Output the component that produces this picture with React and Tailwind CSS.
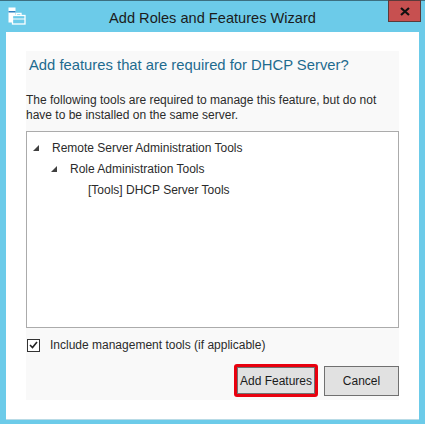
import { useState } from "react";

function AppIcon() {
  return (
    <svg width="18" height="18" viewBox="0 0 18 18" fill="none">
      <rect x="0.5" y="0.5" width="7" height="15" fill="#ffffff" />
      <rect x="0.5" y="4" width="7" height="1.5" fill="#2f7fbf" />
      <rect x="4.5" y="8.5" width="12.5" height="8.5" fill="#6ccbe9" stroke="#ffffff" strokeWidth="1.3" />
      <path d="M8.5 8.5V6.5h4.5V8.5" stroke="#ffffff" strokeWidth="1.3" />
      <path d="M4.5 12h12.5" stroke="#ffffff" strokeWidth="1" />
    </svg>
  );
}

function Arrow() {
  return (
    <svg width="6" height="6" viewBox="0 0 6 6" className="shrink-0">
      <path d="M6 0V6H0Z" fill="#404040" />
    </svg>
  );
}

export default function App() {
  const [checked, setChecked] = useState(true);

  return (
    <div className="w-[425px] h-[424px] bg-[#6ccbe9] border-t border-[#3c6f80] flex flex-col font-['Liberation_Sans',Arial,sans-serif]">
      {/* title bar */}
      <div className="h-[31px] flex items-start relative">
        <div className="pl-[8px] pt-[6px]">
          <AppIcon />
        </div>
        <div className="absolute left-0 right-0 top-[7px] text-center text-[14.6px] text-[#1b1b1b]">
          Add Roles and Features Wizard
        </div>
        <button className="absolute right-[4px] top-[-1px] w-[33px] h-[22px] bg-[#c75050] border border-[#5a3a3a] flex items-center justify-center">
          <svg width="10" height="9" viewBox="0 0 10 9">
            <path d="M1 1L9 8M9 1L1 8" stroke="#111" strokeWidth="2.2" />
          </svg>
        </button>
      </div>

      {/* client */}
      <div className="mx-[6px] h-[388px] bg-white border-b border-[#b9dbe6] pt-[19px] px-[20px]">
        <div className="h-[349px] bg-[#f9f9f9] flex flex-col">
          <h1 className="pl-[3px] pt-[3px] text-[14.8px] text-[#1e6b8f] leading-[22px]">
            Add features that are required for DHCP Server?
          </h1>
          <p className="mt-[17px] text-[12px] leading-[15px] text-[#2b2b2b]">
            The following tools are required to manage this feature, but do not have to be installed on the same server.
          </p>

          <div className="mt-[8px] h-[197px] bg-white border border-[#ababab] pt-[5px] text-[12px] text-[#2b2b2b]">
            <div className="flex items-center h-[21px] pl-[6px] gap-[13px]">
              <Arrow />
              <span>Remote Server Administration Tools</span>
            </div>
            <div className="flex items-center h-[21px] pl-[24px] gap-[13px]">
              <Arrow />
              <span>Role Administration Tools</span>
            </div>
            <div className="flex items-center h-[21px] pl-[61px]">
              <span>[Tools] DHCP Server Tools</span>
            </div>
          </div>

          <label className="mt-[8px] flex items-center gap-[10px] pl-[1px] text-[12px] text-[#2b2b2b]">
            <span
              onClick={() => setChecked(!checked)}
              className="w-[13px] h-[13px] border border-[#333] bg-white flex items-center justify-center"
            >
              {checked && (
                <svg width="9" height="8" viewBox="0 0 9 8">
                  <path d="M1 4L3.5 6.5L8 1" stroke="#222" strokeWidth="1.6" fill="none" />
                </svg>
              )}
            </span>
            Include management tools (if applicable)
          </label>

          <div className="mt-[10px] flex justify-end items-center gap-[6px]">
            <div className="border-[3px] border-[#e8000e] rounded-[3px]">
              <button className="w-[78px] h-[27px] bg-[#e1e1e1] border border-[#707070] text-[12px] text-[#1b1b1b]">
                Add Features
              </button>
            </div>
            <button className="w-[75px] h-[30px] bg-[#e1e1e1] border border-[#707070] text-[12px] text-[#1b1b1b]">
              Cancel
            </button>
          </div>
        </div>
      </div>
    </div>
  );
}
